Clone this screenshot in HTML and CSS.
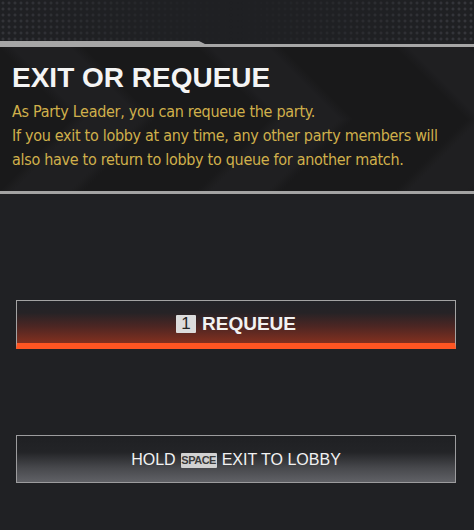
FILE: index.html
```html
<!DOCTYPE html>
<html>
<head>
    <title>Exit or Requeue</title>
    <link rel="stylesheet" href="styles.css">
</head>
<body>
    <div class="top-strip">
        <div class="dots"></div>
    </div>
    <div class="top-bar"></div>

    <div class="header">
        <h1>EXIT OR REQUEUE</h1>
        <p class="info">As Party Leader, you can requeue the party.<br>If you exit to lobby at any time, any other party members will<br>also have to return to lobby to queue for another match.</p>
    </div>
    <div class="bottom-bar"></div>

    <div class="actions">
        <button class="btn requeue">
            <span class="key key-num">1</span>
            <span class="label">REQUEUE</span>
        </button>
        <button class="btn lobby">
            <span class="label">HOLD</span>
            <span class="key key-space">SPACE</span>
            <span class="label">EXIT TO LOBBY</span>
        </button>
    </div>
</body>
</html>
```

FILE: styles.css
```css
body {
  margin: 0;
  padding: 0;
  background-color: #202124;
  font-family: "Liberation Sans", Arial, sans-serif;
  color: #fff;
  width: 474px;
  height: 530px;
  overflow: hidden;
}
.top-strip {
  height: 41px;
  background-color: #1f2023;
}
.dots {
  height: 100%;
  background-image: radial-gradient(circle, #36373c 1.2px, transparent 1.8px);
  background-size: 6px 6px;
  -webkit-mask-image: linear-gradient(to right, rgba(0,0,0,0.9), rgba(0,0,0,0.2) 35%, transparent 50%, rgba(0,0,0,0.4) 70%, #000);
  mask-image: linear-gradient(to right, rgba(0,0,0,0.9), rgba(0,0,0,0.2) 35%, transparent 50%, rgba(0,0,0,0.4) 70%, #000);
}
.top-bar {
  height: 6px;
  background-color: #a6a6a6;
  clip-path: polygon(0 0, 199px 0, 205px 50%, 100% 50%, 100% 100%, 0 100%);
}
.header {
  height: 144px;
  box-sizing: border-box;
  padding: 15px 12px 0;
  background-color: #1a1a1b;
  background-image:
    repeating-linear-gradient(45deg, #19191a 0 50px, #1f1f21 60px 100px, #19191a 110px 140px),
    repeating-linear-gradient(135deg, #19191a 0 50px, #1f1f21 60px 100px, #19191a 110px 140px);
  background-size: 100% 50%, 100% 50%;
  background-position: top left, bottom left;
  background-repeat: no-repeat;
}
h1 {
  margin: 0;
  font-size: 28px;
  line-height: 32px;
  font-weight: bold;
  color: #f4f4f4;
}
.info {
  margin: 6px 0 0;
  font-family: "DejaVu Sans Condensed", "DejaVu Sans", sans-serif;
  font-size: 16px;
  letter-spacing: -0.3px;
  line-height: 24px;
  color: #d0b04b;
  white-space: nowrap;
}
.bottom-bar {
  height: 3px;
  background-color: #a3a3a3;
}
.actions {
  display: flex;
  flex-direction: column;
  gap: 86px;
  padding: 106px 18px 0 16px;
}
.btn {
  display: flex;
  align-items: center;
  justify-content: center;
  gap: 6px;
  box-sizing: border-box;
  width: 100%;
  margin: 0;
  padding: 0;
  border: 1px solid #a3a3a3;
  font-family: "Liberation Sans", Arial, sans-serif;
  color: #f2f2f2;
  cursor: pointer;
}
.requeue {
  height: 49px;
  border-bottom: 6px solid #ff5522;
  background: linear-gradient(to bottom, #222327 0%, #262326 28%, #4c2623 60%, #83301f 100%);
  padding-top: 4px;
}
.requeue .label {
  font-size: 19px;
  font-weight: bold;
}
.lobby {
  height: 48px;
  gap: 5px;
  padding-top: 2px;
  border-color: #9c9c9e;
  background: linear-gradient(to bottom, #1f2023 0%, #232427 35%, #48494d 70%, #606166 100%);
}
.lobby .label {
  font-size: 16px;
}
.key {
  display: inline-flex;
  align-items: center;
  justify-content: center;
  background-color: #dcdcdc;
  color: #262626;
  border-radius: 1px;
}
.key-num {
  width: 20px;
  height: 18px;
  font-size: 17px;
}
.key-space {
  width: 36px;
  height: 15px;
  font-size: 11px;
  font-weight: bold;
  letter-spacing: -0.5px;
  color: #3a3a3a;
  background-color: #d2d2d2;
}
```
